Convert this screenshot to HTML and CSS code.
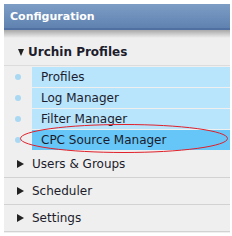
FILE: index.html
```html
<!DOCTYPE html>
<html lang="en">
<head>
  <meta charset="UTF-8" />
  <title>Configuration</title>
  <link rel="stylesheet" href="styles.css">
</head>
<body>
  <div class="panel">
    <div class="panel-title">Configuration</div>
    <div class="panel-shadow"></div>

    <div class="section open">
      <div class="section-head"><span class="arrow down"></span>Urchin Profiles</div>
      <ul class="sub-list">
        <li><span class="dot"></span><span class="sub-item">Profiles</span></li>
        <li><span class="dot"></span><span class="sub-item">Log Manager</span></li>
        <li><span class="dot"></span><span class="sub-item">Filter Manager</span></li>
        <li><span class="dot"></span><span class="sub-item selected">CPC Source Manager</span></li>
      </ul>
    </div>

    <div class="section-row"><span class="arrow right"></span>Users &amp; Groups</div>
    <div class="section-row"><span class="arrow right"></span>Scheduler</div>
    <div class="section-row"><span class="arrow right"></span>Settings</div>

    <!-- annotation circle round the selected item -->
    <svg class="mark" width="212" height="32" viewBox="0 0 212 32">
      <ellipse cx="105" cy="15.5" rx="103.5" ry="14" fill="none" stroke="#e0202a" stroke-width="1"/>
    </svg>
  </div>
</body>
</html>
```

FILE: styles.css
```css
body { margin:0; background:#fff; font-family:'DejaVu Sans', Verdana, sans-serif; color:#1c1c2c; }
.panel { position:relative; margin:4px 0 0 4px; width:226px; background:#efefef; padding-bottom:1px; }
.panel-title { height:24px; line-height:25px; padding-left:6px; color:#fff; font-size:11px; font-weight:bold; background:linear-gradient(#7d9dc5, #5f82b0); border-bottom:2px solid #4f70a0; }
.panel-shadow { height:8px; background:linear-gradient(#a8a8a8, #efefef); }
.section-head { display:flex; align-items:center; height:27px; font-size:12px; font-weight:bold; padding-left:14px; border-bottom:1px solid #dcdcdc; }
.arrow { display:inline-block; width:0; height:0; border-style:solid; border-color:transparent; }
.arrow.down { border-width:7px 3.5px 0; border-top-color:#222; margin:1px 4px 0 0; }
.arrow.right { border-width:4px 0 4px 7px; border-left-color:#222; margin-right:8px; }
.sub-list { list-style:none; margin:1px 0 0; padding:0; }
.sub-list li { display:flex; height:20px; margin-bottom:1px; }
.dot { width:28px; display:flex; align-items:center; justify-content:center; padding-right:1px; box-sizing:border-box; }
.dot::before { content:''; width:6px; height:6px; border-radius:50%; background:#a9d8f3; }
.sub-item { flex:1; background:#b8e4fc; font-size:12px; line-height:21px; padding-left:9px; }
.sub-item.selected { background:#66c6f7; }
.section-row { display:flex; align-items:center; height:26px; font-size:12px; padding-left:13px; border-bottom:1px solid #d2d2d2; }
.mark { position:absolute; left:15px; top:119px; }
```
